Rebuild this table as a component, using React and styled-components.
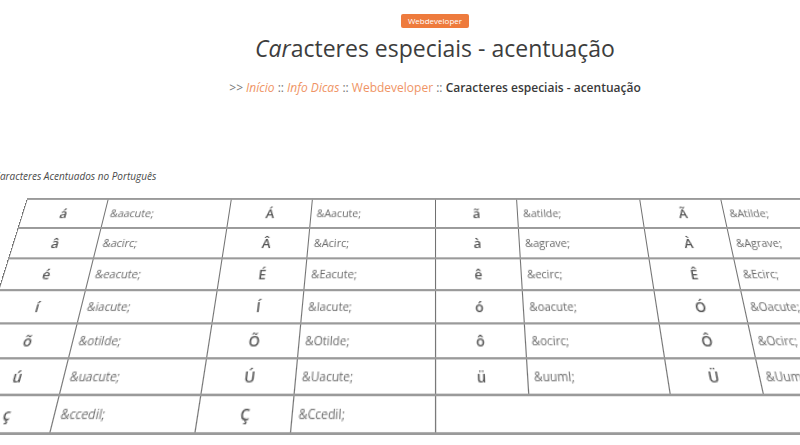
import React from "react";
import styled, { createGlobalStyle } from "styled-components";

const GlobalStyle = createGlobalStyle`
  html, body {
    margin: 0;
    padding: 0;
    background: #fff;
  }
  body {
    width: 800px;
    height: 445px;
    overflow: hidden;
    font-family: "Open Sans", "DejaVu Sans", sans-serif;
  }
`;

const Page = styled.div`
  width: 816px;
  margin-left: 27px;
  padding-top: 14px;
`;

const Header = styled.header`
  display: flex;
  flex-direction: column;
  align-items: center;
`;

const Badge = styled.span`
  background: #ee7b3d;
  color: #fff;
  font-size: 8px;
  line-height: 14px;
  padding: 0 7px;
  border-radius: 2px;
`;

const Title = styled.h1`
  margin: 5px 0 0;
  font-size: 23px;
  font-weight: 400;
  line-height: 30px;
  color: #3d3d3d;
`;

const Crumbs = styled.nav`
  margin-top: 16px;
  font-size: 12px;
  color: #777;
`;

const Crumb = styled.a`
  color: #ef9465;
  text-decoration: none;
  font-style: ${(p) => (p.$italic ? "italic" : "normal")};
`;

const Current = styled.strong`
  font-weight: 600;
  color: #3a3a3a;
`;

const Caption = styled.p`
  margin: 73px 0 0 -33px;
  font-size: 10px;
  font-style: italic;
  color: #4a4a4a;
`;

const Board = styled.table`
  margin-top: 15px;
  width: 816px;
  table-layout: fixed;
  border-collapse: collapse;
  transform: perspective(450px) rotateX(19deg);
  transform-origin: 408px 0;
`;

const Col = styled.col`
  width: ${(p) => p.$w}px;
`;

const Row = styled.tr`
  height: 30px;
`;

const Cell = styled.td`
  border-top: 2px solid #9a9a9a;
  border-bottom: 2px solid #9a9a9a;
  border-left: 1px solid #707070;
  border-right: 1px solid #707070;
  padding: 0 5px;
  white-space: nowrap;
  overflow: hidden;
  text-align: ${(p) => (p.$char ? "center" : "left")};
  font-size: ${(p) => (p.$char ? "13px" : "10.5px")};
  font-weight: ${(p) => (p.$char ? 600 : 400)};
  color: ${(p) => (p.$char ? "#555" : "#6a6a6a")};
`;

const rows = [
  ["á", "&aacute;", "Á", "&Aacute;", "ã", "&atilde;", "Ã", "&Atilde;"],
  ["â", "&acirc;", "Â", "&Acirc;", "à", "&agrave;", "À", "&Agrave;"],
  ["é", "&eacute;", "É", "&Eacute;", "ê", "&ecirc;", "Ê", "&Ecirc;"],
  ["í", "&iacute;", "Í", "&Iacute;", "ó", "&oacute;", "Ó", "&Oacute;"],
  ["õ", "&otilde;", "Õ", "&Otilde;", "ô", "&ocirc;", "Ô", "&Ocirc;"],
  ["ú", "&uacute;", "Ú", "&Uacute;", "ü", "&uuml;", "Ü", "&Uuml;"],
  ["ç", "&ccedil;", "Ç", "&Ccedil;"],
];

const widths = [81, 123, 81, 123, 81, 123, 81, 123];

export default function App() {
  return (
    <>
      <GlobalStyle />
      <Page>
        <Header>
          <Badge>Webdeveloper</Badge>
          <Title>
            <em>Car</em>acteres especiais - acentuação
          </Title>
          <Crumbs>
            &gt;&gt; <Crumb href="#" $italic>Início</Crumb> ::{" "}
            <Crumb href="#" $italic>Info Dicas</Crumb> ::{" "}
            <Crumb href="#">Webdeveloper</Crumb> ::{" "}
            <Current>Caracteres especiais - acentuação</Current>
          </Crumbs>
        </Header>
        <Caption>Caracteres Acentuados no Português</Caption>
        <Board>
          <colgroup>
            {widths.map((w, i) => (
              <Col key={i} $w={w} />
            ))}
          </colgroup>
          <tbody>
            {rows.map((r, i) => (
              <Row key={i}>
                {r.map((t, j) => (
                  <Cell key={j} $char={j % 2 === 0}>
                    {t}
                  </Cell>
                ))}
                {r.length < 8 && <Cell colSpan={8 - r.length} />}
              </Row>
            ))}
          </tbody>
        </Board>
      </Page>
    </>
  );
}
